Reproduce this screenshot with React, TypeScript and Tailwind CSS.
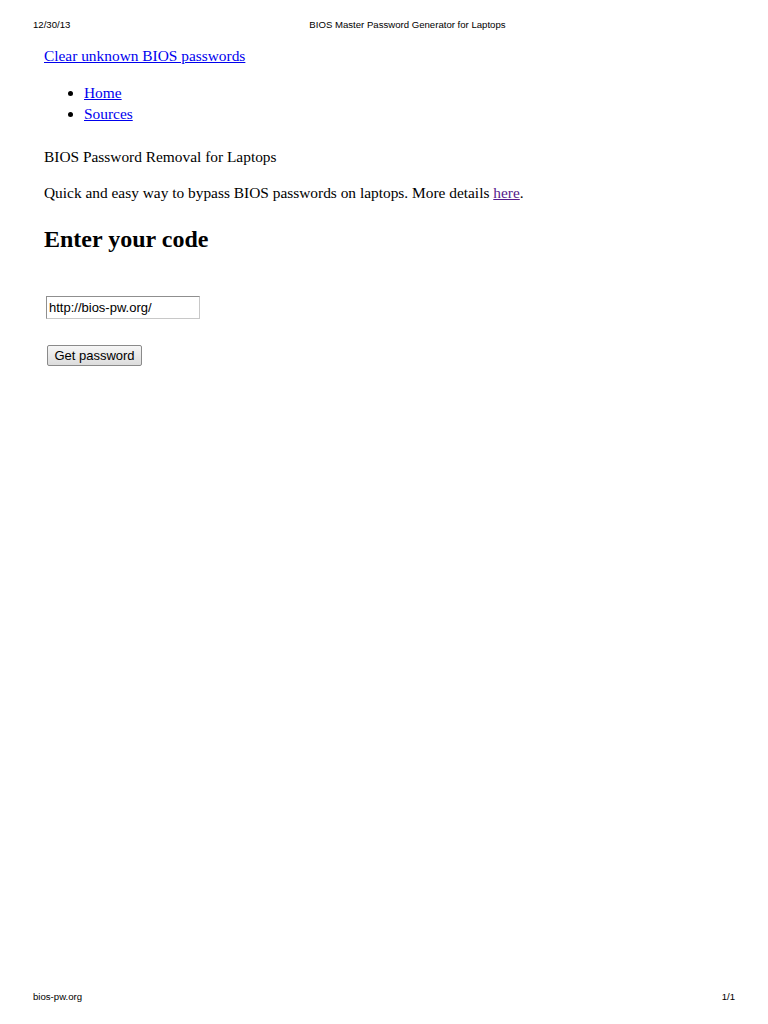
export default function App() {
  return (
    <div className="flex min-h-[1024px] flex-col bg-white text-black" style={{ fontFamily: '"Liberation Serif", serif' }}>
      {/* print header */}
      <div className="flex px-[33px] pt-[18px] text-[9.6px] leading-[14px]" style={{ fontFamily: '"Liberation Sans", sans-serif' }}>
        <span>12/30/13</span>
        <span className="ml-[239px]">BIOS Master Password Generator for Laptops</span>
      </div>

      <main className="pl-[44px] pt-[13px] text-[15.4px] leading-[21px]">
        <a href="#" className="text-[#0000ee] underline">Clear unknown BIOS passwords</a>

        <ul className="mt-[16px] list-disc pl-[40px]">
          <li><a href="#" className="text-[#0000ee] underline">Home</a></li>
          <li><a href="#" className="text-[#0000ee] underline">Sources</a></li>
        </ul>

        <p className="mt-[22px]">BIOS Password Removal for Laptops</p>
        <p className="mt-[15px]">
          Quick and easy way to bypass BIOS passwords on laptops. More details{' '}
          <a href="#" className="text-[#551a8b] underline">here</a>.
        </p>

        <h2 className="mt-[22px] text-[24px] font-bold leading-[28px]">Enter your code</h2>

        <form className="mt-[43px] flex flex-col items-start" style={{ fontFamily: '"Liberation Sans", sans-serif' }}>
          <input
            type="text"
            defaultValue="http://bios-pw.org/"
            className="ml-[2px] h-[23px] w-[154px] border border-t-[#8f8f8f] border-l-[#8f8f8f] border-r-[#c8c8c8] border-b-[#c8c8c8] px-[2px] text-[13px] text-black outline-none"
          />
          <button
            type="button"
            className="ml-[3px] mt-[26px] h-[21px] w-[95px] rounded-[2px] border border-[#8a8a8a] bg-gradient-to-b from-[#f6f6f6] to-[#dcdcdc] text-[13px] leading-[19px] text-black"
          >
            Get password
          </button>
        </form>
      </main>

      {/* print footer */}
      <div className="mt-auto flex justify-between px-[33px] pb-[20px] text-[9.6px] leading-[14px]" style={{ fontFamily: '"Liberation Sans", sans-serif' }}>
        <span>bios-pw.org</span>
        <span>1/1</span>
      </div>
    </div>
  );
}
